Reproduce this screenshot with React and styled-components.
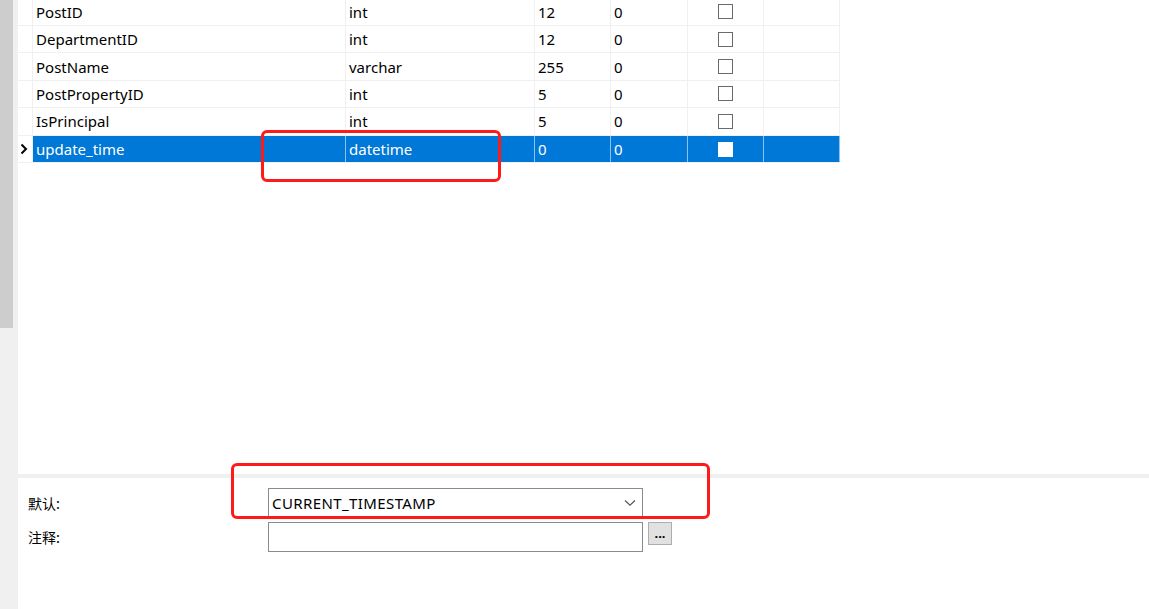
import React from "react";
import styled, { createGlobalStyle } from "styled-components";

const GlobalStyle = createGlobalStyle`
  html, body {
    margin: 0;
    padding: 0;
    background: #ffffff;
  }
  body {
    font-family: "Noto Sans", "Noto Sans CJK SC", sans-serif;
    color: #000;
    overflow: hidden;
  }
`;

const Page = styled.div`
  position: relative;
  display: flex;
  width: 1149px;
  height: 609px;
  overflow: hidden;
  background: #fff;
`;

const LeftStrip = styled.div`
  width: 18px;
  flex: none;
  background: #f0f0f0;
`;

const Thumb = styled.div`
  width: 13px;
  height: 328px;
  background: #cdcdcd;
`;

const Main = styled.div`
  flex: 1;
  display: flex;
  flex-direction: column;
`;

const GridArea = styled.div`
  height: 474px;
  flex: none;
  overflow: hidden;
`;

const Rows = styled.div`
  margin-top: -1.4px;
  display: flex;
  flex-direction: column;
  align-items: flex-start;
`;

const Row = styled.div`
  display: flex;
  height: 27.4px;
  box-sizing: border-box;
  border-bottom: 1px solid #f0f0f0;
`;

const Indicator = styled.div`
  width: 15px;
  flex: none;
  background: #fff;
  border-right: 1px solid #f0f0f0;
  box-sizing: border-box;
  display: flex;
  align-items: center;
  justify-content: flex-start;
  padding-left: 2px;
`;

const Cell = styled.div`
  width: ${(p) => p.$w}px;
  flex: none;
  box-sizing: border-box;
  border-right: 1px solid ${(p) => (p.$sel ? "#8fc2ea" : "#f0f0f0")};
  background: ${(p) => (p.$sel ? "#0078d7" : "#fff")};
  color: ${(p) => (p.$sel ? "#fff" : "#000")};
  font-size: 15px;
  line-height: 26px;
  padding-left: 3px;
  white-space: nowrap;
  display: flex;
  align-items: center;
  justify-content: ${(p) => (p.$center ? "center" : "flex-start")};
`;

const Check = styled.span`
  width: 15px;
  height: 15px;
  box-sizing: border-box;
  border: 1.5px solid #6a6a6a;
  background: #fff;
  margin-left: -3px;
  ${(p) => p.$sel && "border-color: #ffffff; margin-top: 1px;"}
`;

const Separator = styled.div`
  height: 4px;
  background: #f0f0f0;
  flex: none;
`;

const Form = styled.div`
  padding: 10px 0 0 10px;
  display: flex;
  flex-direction: column;
  gap: 4px;
`;

const FieldRow = styled.div`
  display: flex;
  align-items: flex-start;
`;

const Label = styled.div`
  width: 240px;
  flex: none;
  font-size: 14px;
  line-height: 30px;
  font-family: "Noto Sans CJK SC", sans-serif;
`;

const Select = styled.div`
  width: 375px;
  height: 30px;
  box-sizing: border-box;
  border: 1px solid #8a8a8a;
  display: flex;
  align-items: center;
  justify-content: space-between;
  padding: 0 6px 0 3px;
  font-size: 15px;
  letter-spacing: 0.4px;
  background: #fff;
`;

const Input = styled.div`
  width: 375px;
  height: 30px;
  box-sizing: border-box;
  border: 1px solid #8a8a8a;
  background: #fff;
`;

const DotsButton = styled.div`
  width: 24px;
  height: 23px;
  margin-left: 5px;
  box-sizing: border-box;
  background: #e1e1e1;
  border: 1px solid #adadad;
  font-size: 13px;
  font-weight: bold;
  line-height: 20px;
  text-align: center;
  color: #000;
`;

const Mark = styled.div`
  position: absolute;
  left: ${(p) => p.$x}px;
  top: ${(p) => p.$y}px;
  width: ${(p) => p.$w}px;
  height: ${(p) => p.$h}px;
  box-sizing: border-box;
  border: 3px solid #ff1a1a;
  border-radius: 6px;
  pointer-events: none;
`;

const cols = [313, 189, 76, 77, 76, 76];

const data = [
  ["PostID", "int", "12", "0"],
  ["DepartmentID", "int", "12", "0"],
  ["PostName", "varchar", "255", "0"],
  ["PostPropertyID", "int", "5", "0"],
  ["IsPrincipal", "int", "5", "0"],
  ["update_time", "datetime", "0", "0"],
];

const Arrow = () => (
  <svg width="8" height="12" viewBox="0 0 8 12">
    <path d="M1.5 1.5 L6 6 L1.5 10.5" fill="none" stroke="#000" strokeWidth="2" />
  </svg>
);

const Chevron = () => (
  <svg width="12" height="8" viewBox="0 0 12 8">
    <path d="M1 1.5 L6 6.2 L11 1.5" fill="none" stroke="#555" strokeWidth="1.2" />
  </svg>
);

export default function App() {
  return (
    <Page>
      <GlobalStyle />
      <LeftStrip>
        <Thumb />
      </LeftStrip>
      <Main>
        <GridArea>
          <Rows>
            {data.map((r, i) => {
              const sel = i === data.length - 1;
              return (
                <Row key={r[0]}>
                  <Indicator>{sel && <Arrow />}</Indicator>
                  <Cell $w={cols[0]} $sel={sel}>{r[0]}</Cell>
                  <Cell $w={cols[1]} $sel={sel}>{r[1]}</Cell>
                  <Cell $w={cols[2]} $sel={sel}>{r[2]}</Cell>
                  <Cell $w={cols[3]} $sel={sel}>{r[3]}</Cell>
                  <Cell $w={cols[4]} $sel={sel} $center>
                    <Check $sel={sel} />
                  </Cell>
                  <Cell $w={cols[5]} $sel={sel} />
                </Row>
              );
            })}
          </Rows>
        </GridArea>
        <Separator />
        <Form>
          <FieldRow>
            <Label>默认:</Label>
            <Select>
              <span>CURRENT_TIMESTAMP</span>
              <Chevron />
            </Select>
          </FieldRow>
          <FieldRow>
            <Label>注释:</Label>
            <Input />
            <DotsButton>...</DotsButton>
          </FieldRow>
        </Form>
      </Main>
      <Mark $x={261} $y={130} $w={240} $h={52} />
      <Mark $x={231} $y={463} $w={479} $h={56} />
    </Page>
  );
}
